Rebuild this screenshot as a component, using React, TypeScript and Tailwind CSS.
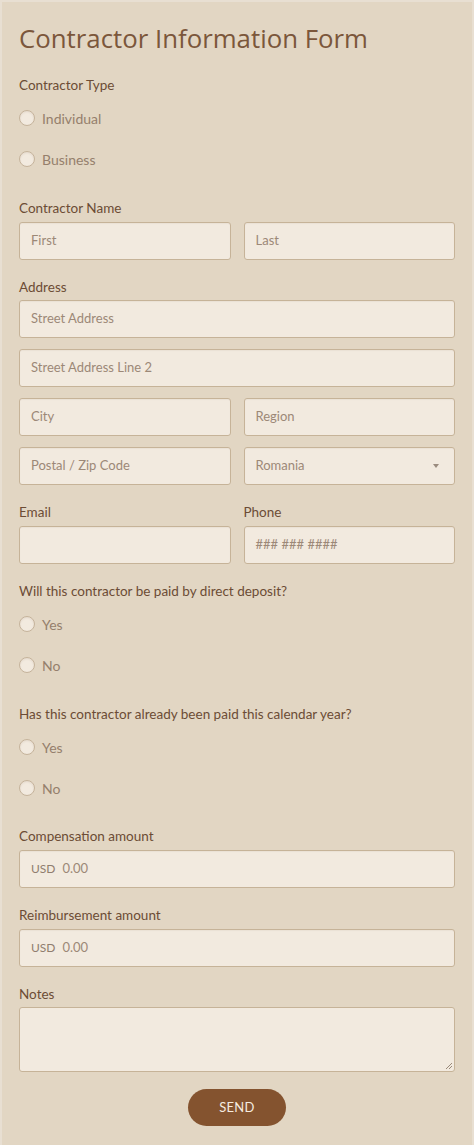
import React from "react";

const inputCls =
  "h-[38px] w-full rounded-[3px] border border-[#c6b398] bg-[#f2eadf] px-[11px] flex items-center text-[13px] text-[#9c8877] shadow-[inset_0_1px_1px_rgba(120,90,60,0.06)]";

function Field({ text, className = "" }: { text?: string; className?: string }) {
  return <div className={`${inputCls} ${className}`}>{text}</div>;
}

function Radio({ label, className = "" }: { label: string; className?: string }) {
  return (
    <div className={`flex h-[24px] items-center ${className}`}>
      <span className="h-[16px] w-[16px] rounded-full border border-[#c5b39b] bg-[#f2eadf] shadow-[inset_0_1px_2px_rgba(120,90,60,0.12)]" />
      <span className="ml-[7px] text-[14px] text-[#957f6c]">{label}</span>
    </div>
  );
}

function Label({ children, className = "" }: { children: React.ReactNode; className?: string }) {
  return <div className={`h-[20px] leading-[20px] text-[13.5px] text-[#6c4c35] ${className}`}>{children}</div>;
}

export default function App() {
  return (
    <div
      className="min-h-[1145px] w-[474px] border-[2px] border-[#e8dfd2] bg-[#e2d6c3] pb-[20px] px-[17px] pt-[18px]"
      style={{ fontFamily: "Lato, 'Noto Sans', sans-serif" }}
    >
      <div
        className="h-[36px] leading-[36px] text-[25.8px] text-[#7b573b]"
        style={{ fontFamily: "'Open Sans', 'Noto Sans', sans-serif" }}
      >
        Contractor Information Form
      </div>

      <Label className="mt-[19px]">Contractor Type</Label>
      <Radio label="Individual" className="mt-[11px]" />
      <Radio label="Business" className="mt-[17px]" />

      <Label className="mt-[27px]">Contractor Name</Label>
      <div className="mt-[4px] grid grid-cols-2 gap-[13px]">
        <Field text="First" />
        <Field text="Last" />
      </div>

      <Label className="mt-[17px]">Address</Label>
      <div className="mt-[3px] flex flex-col gap-[11px]">
        <Field text="Street Address" />
        <Field text="Street Address Line 2" />
        <div className="grid grid-cols-2 gap-[13px]">
          <Field text="City" />
          <Field text="Region" />
        </div>
        <div className="grid grid-cols-2 gap-[13px]">
          <Field text="Postal / Zip Code" />
          <div className={`${inputCls} justify-between`}>
            <span>Romania</span>
            <svg width="6" height="4" viewBox="0 0 6 4" className="mr-[4px]">
              <path d="M0 0 L6 0 L3 4 Z" fill="#9a8b7e" />
            </svg>
          </div>
        </div>
      </div>

      <div className="mt-[17px] grid grid-cols-2 gap-[13px]">
        <div>
          <Label>Email</Label>
          <Field className="mt-[4px]" />
        </div>
        <div>
          <Label>Phone</Label>
          <Field className="mt-[4px]" text="### ### ####" />
        </div>
      </div>

      <Label className="mt-[17px]">Will this contractor be paid by direct deposit?</Label>
      <Radio label="Yes" className="mt-[11px]" />
      <Radio label="No" className="mt-[17px]" />

      <Label className="mt-[27px]">Has this contractor already been paid this calendar year?</Label>
      <Radio label="Yes" className="mt-[11px]" />
      <Radio label="No" className="mt-[17px]" />

      <Label className="mt-[26px]">Compensation amount</Label>
      <div className={`${inputCls} mt-[4px]`}>
        <span className="text-[12px] text-[#8f7d6e]">USD</span>
        <span className="ml-[7px] text-[#9c8877]">0.00</span>
      </div>

      <Label className="mt-[17px]">Reimbursement amount</Label>
      <div className={`${inputCls} mt-[4px]`}>
        <span className="text-[12px] text-[#8f7d6e]">USD</span>
        <span className="ml-[7px] text-[#9c8877]">0.00</span>
      </div>

      <Label className="mt-[17px]">Notes</Label>
      <div className="relative mt-[3px] h-[65px] w-full rounded-[3px] border border-[#c6b398] bg-[#f2eadf]">
        <svg width="8" height="8" viewBox="0 0 8 8" className="absolute bottom-[1px] right-[1px]">
          <path d="M7 1 L1 7 M7 4 L4 7" stroke="#9a8a7a" strokeWidth="1" />
        </svg>
      </div>

      <div className="mt-[17px] flex justify-center">
        <button className="h-[37px] w-[98px] rounded-full bg-[#84532f] text-[13px] tracking-[0.3px] text-[#f6ece0]">
          SEND
        </button>
      </div>
    </div>
  );
}
